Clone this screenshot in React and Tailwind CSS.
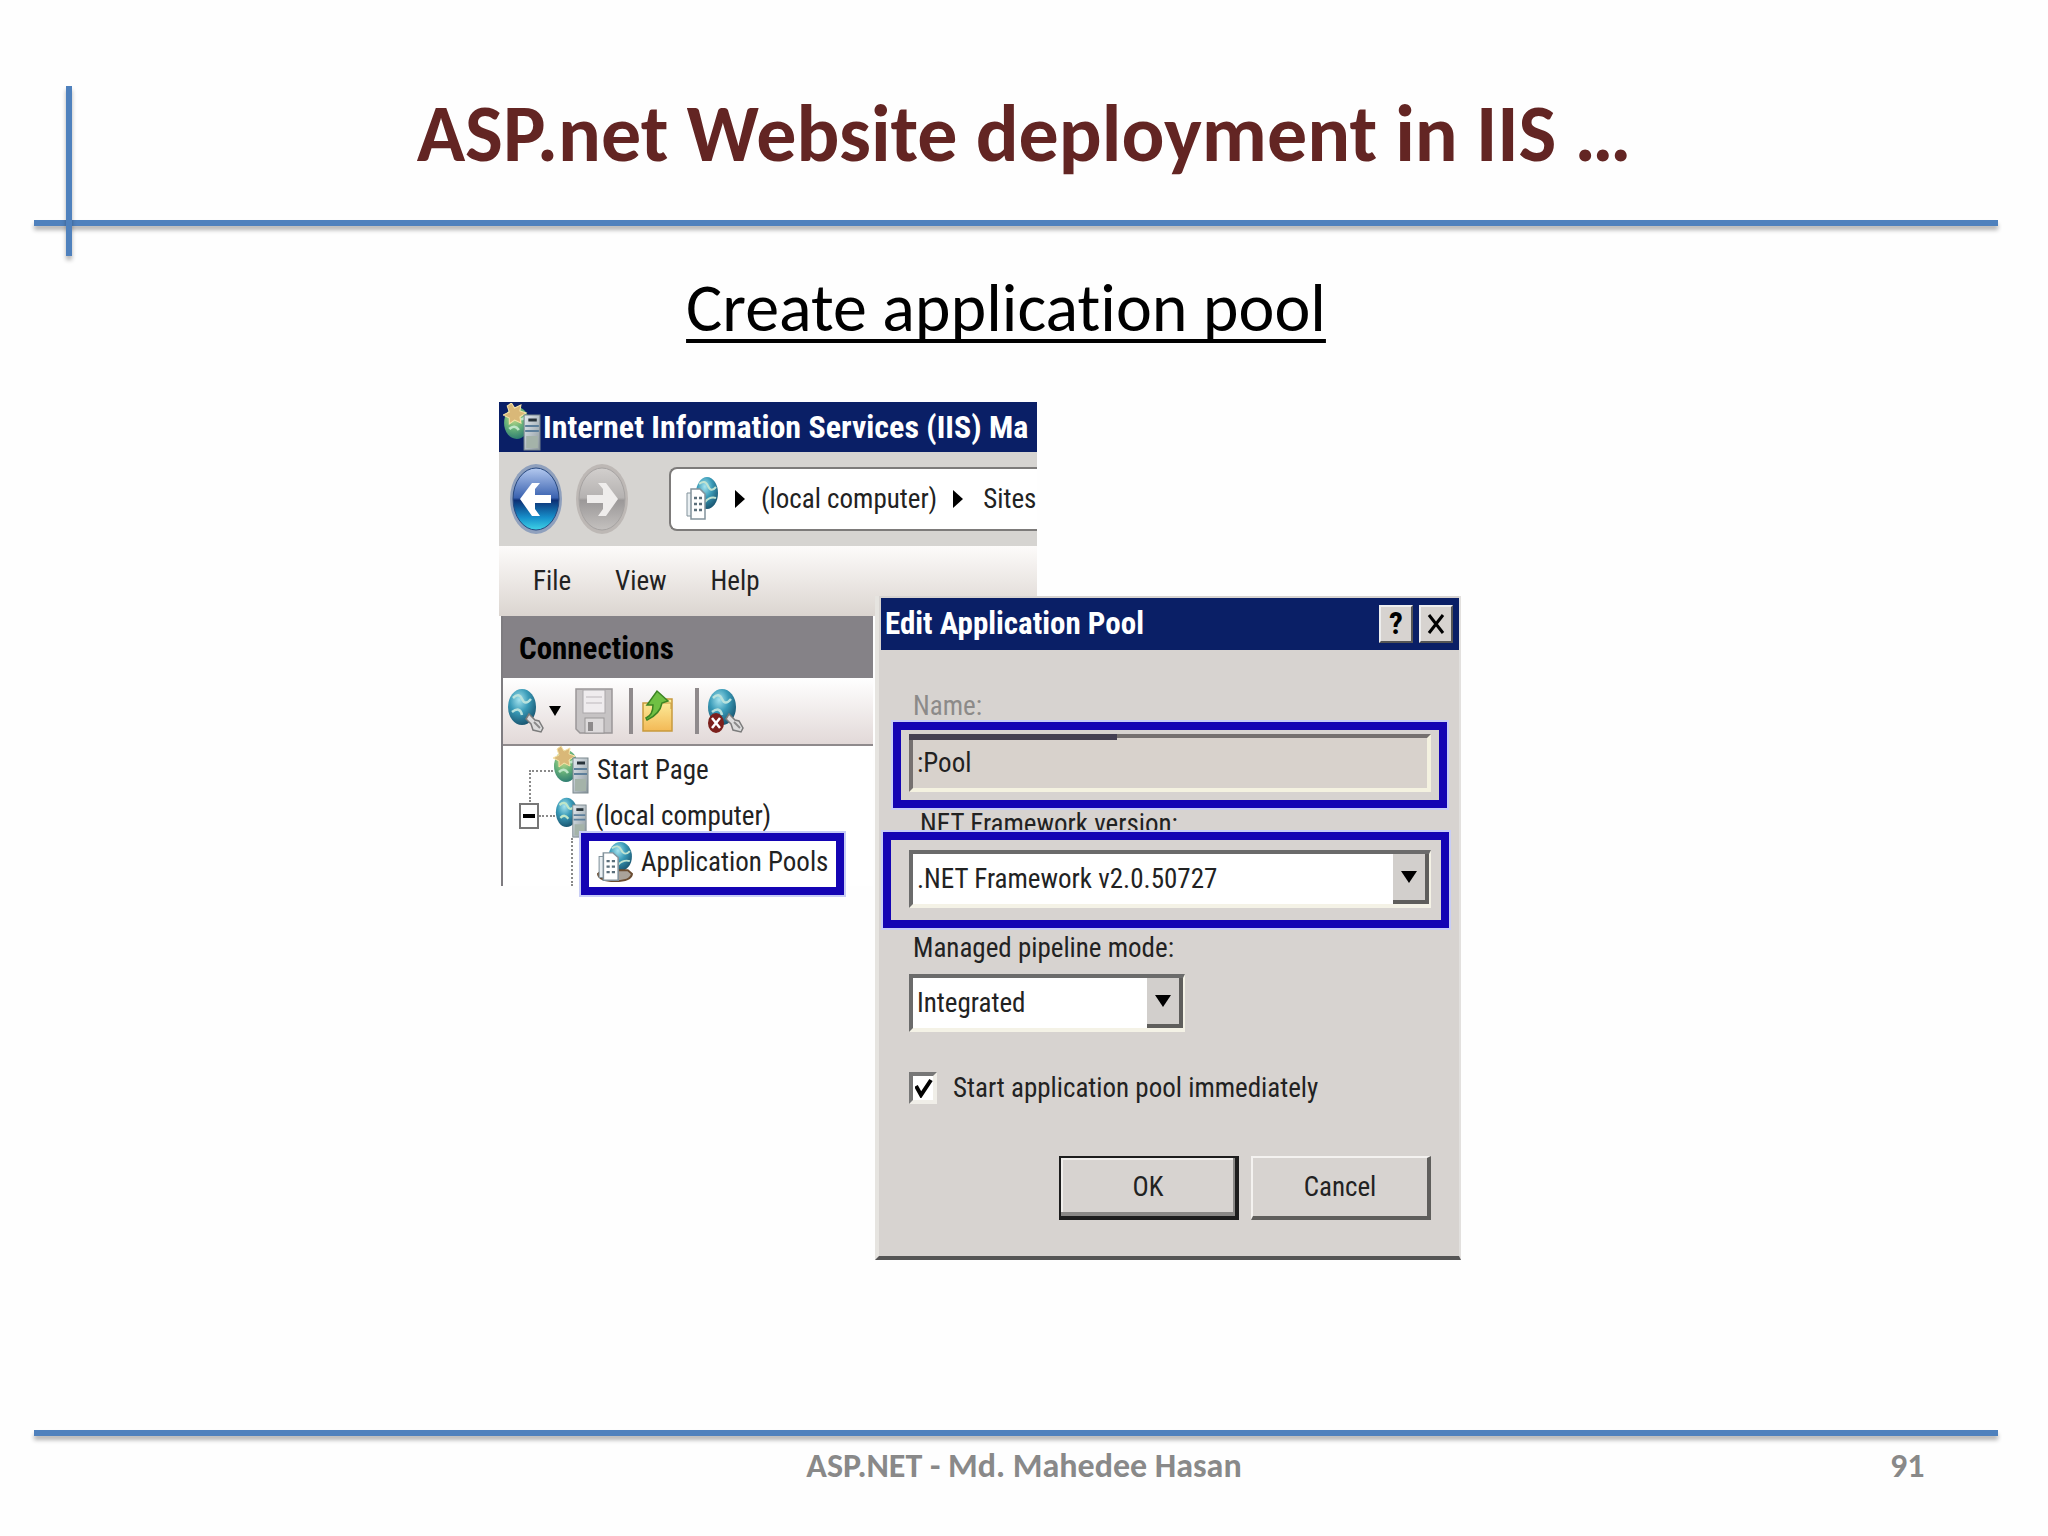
import { useState } from "react";

const uiFont = "font-['Roboto_Condensed','Roboto',sans-serif]";

// Shared gradients for the small drawings
const IconDefs = () => (
  <svg className="absolute size-0" aria-hidden="true">
    <defs>
      <radialGradient id="globe" cx="0.4" cy="0.3" r="0.75">
        <stop offset="0" stopColor="#a5e3ee" />
        <stop offset="0.45" stopColor="#3a9bb8" />
        <stop offset="1" stopColor="#17506b" />
      </radialGradient>
      <radialGradient id="greenGlobe" cx="0.4" cy="0.3" r="0.8">
        <stop offset="0" stopColor="#d7e08c" />
        <stop offset="0.45" stopColor="#6db67a" />
        <stop offset="1" stopColor="#1f6f6f" />
      </radialGradient>
      <linearGradient id="tower" x1="0" y1="0" x2="1" y2="1">
        <stop offset="0" stopColor="#e3eaf0" />
        <stop offset="1" stopColor="#8b979c" />
      </linearGradient>
      <linearGradient id="backTop" x1="0" y1="0" x2="0" y2="1">
        <stop offset="0" stopColor="#b4c9ef" />
        <stop offset="0.48" stopColor="#3a62b0" />
        <stop offset="0.52" stopColor="#0c2f74" />
        <stop offset="0.8" stopColor="#1690cb" />
        <stop offset="1" stopColor="#3fd3e6" />
      </linearGradient>
      <linearGradient id="forwardTop" x1="0" y1="0" x2="0" y2="1">
        <stop offset="0" stopColor="#d2cfcd" />
        <stop offset="0.48" stopColor="#b5b2b1" />
        <stop offset="0.52" stopColor="#9b9898" />
        <stop offset="1" stopColor="#c4c1bf" />
      </linearGradient>
      <linearGradient id="folder" x1="0" y1="0" x2="0" y2="1">
        <stop offset="0" stopColor="#fdf0a0" />
        <stop offset="1" stopColor="#f3b956" />
      </linearGradient>
    </defs>
  </svg>
);

const ServerIcon = ({ className, start }) => (
  <svg viewBox="0 0 36 48" preserveAspectRatio="none" className={className}>
    <ellipse cx="13" cy="20" rx="12" ry="16" fill={start ? "url(#greenGlobe)" : "url(#globe)"} />
    <path d="M5 12q6-5 9 1t7 1M6 26q5-5 9 1" fill="none" stroke="#bfe6c8" strokeWidth="2.5" />
    {start && (
      <path
        d="M8 0l3 5 6-3-1 6 6 2-6 4 1 6-6-3-5 4v-6l-6-3 6-3-2-6z"
        fill="#d9b878"
        stroke="#f6e3a8"
      />
    )}
    <rect x="20" y="12" width="15" height="35" fill="url(#tower)" stroke="#7b888e" />
    <path d="M24 17h8" stroke="#28333a" strokeWidth="3" />
    <path d="M21 23h13M21 28h13" stroke="#5d7f9b" strokeWidth="2" />
    <rect x="22" y="33" width="11" height="12" fill="#a4b3a9" />
  </svg>
);

const PageGlobeIcon = ({ className, tray }) => (
  <svg viewBox="0 0 34 46" preserveAspectRatio="none" className={className}>
    <ellipse cx="22" cy="17" rx="11" ry="16" fill="url(#globe)" />
    <path d="M14 8q6-5 9 2t8 1M20 26q5-6 11-4" fill="none" stroke="#bfe3d2" strokeWidth="2" />
    {tray && (
      <path d="M1 36q1 8 16 8t16-8l-4-4H5z" fill="#a9a29a" stroke="#6b4d32" strokeWidth="2" />
    )}
    <path d="M2 17h14v23H2z" fill="#e9eff2" stroke="#83939c" />
    <path d="M6 13h9l5 5v25H6z" fill="#fff" stroke="#83939c" strokeWidth="1.5" />
    <path d="M9 22h3M14 22h3M9 28h3M14 28h3M9 34h3M14 34h3" stroke="#5b6f7b" strokeWidth="2.5" />
  </svg>
);

const ConnectIcon = ({ className, disconnect }) => (
  <svg viewBox="0 0 38 46" preserveAspectRatio="none" className={className}>
    <ellipse cx="15" cy="19" rx="14" ry="18" fill="url(#globe)" />
    <path d="M6 10q6-6 9 1t9 0M5 24q8-6 10 3" fill="none" stroke="#b9e2dd" strokeWidth="2.5" />
    <path d="M22 26l6 6 4 1 4 7-2 4-8-2-2-6-5-5z" fill="#dcdcdc" stroke="#7c7c7c" strokeWidth="1.5" />
    <path d="M27 34l6 6" stroke="#8b8b8b" strokeWidth="2" />
    {disconnect && (
      <>
        <ellipse cx="9" cy="35" rx="8" ry="10" fill="#7c201c" />
        <path d="M5 30l8 10M13 30l-8 10" stroke="#fff" strokeWidth="2.5" />
      </>
    )}
  </svg>
);

const SaveIcon = () => (
  <svg viewBox="0 0 38 46" preserveAspectRatio="none" className="h-11.5 w-9.5">
    <path d="M1 1h36v44H5l-4-4z" fill="#c6c3c4" stroke="#9a9798" strokeWidth="1.5" />
    <rect x="8" y="2" width="22" height="23" fill="#efecee" stroke="#aaa7a9" />
    <path d="M11 9h16M11 15h16" stroke="#d6d2d5" strokeWidth="2" />
    <rect x="10" y="30" width="19" height="15" fill="#dddadb" stroke="#9a9798" />
    <rect x="13" y="34" width="5" height="9" fill="#8d8a8b" />
  </svg>
);

const UpFolderIcon = () => (
  <svg viewBox="0 0 34 44" preserveAspectRatio="none" className="h-11 w-8.5">
    <path d="M2 14h12l3-4h14v32H2z" fill="url(#folder)" stroke="#c79a3e" strokeWidth="1.5" />
    <path d="M22 14h8v6" fill="none" stroke="#c79a3e" />
    <path
      d="M5 29q7-3 7-13H6L16 2l11 10-6 2q-2 11-15 17z"
      fill="#6fc043"
      stroke="#3c8424"
      strokeWidth="1.5"
    />
  </svg>
);

const NavIcon = ({ forward }) => (
  <svg viewBox="0 0 54 72" preserveAspectRatio="none" className="h-18 w-13.5">
    <ellipse cx="27" cy="36" rx="26" ry="35" fill={forward ? "#bdb8b5" : "#8fa0bd"} />
    <ellipse
      cx="27"
      cy="36"
      rx="23"
      ry="31"
      fill={forward ? "url(#forwardTop)" : "url(#backTop)"}
      stroke={forward ? "#a5a2a1" : "#27487f"}
    />
    {forward ? (
      <path d="M12 32h16v-6l-5-6h8l12 16-12 17h-8l5-7v-6H12z" fill="#efedec" />
    ) : (
      <path d="M42 32H26v-6l5-6h-8L11 36l12 17h8l-5-7v-6h16z" fill="#fff" />
    )}
  </svg>
);

const Triangle = ({ className, down }) => (
  <svg viewBox="0 0 10 10" preserveAspectRatio="none" className={className}>
    <path d={down ? "M0 0h10L5 10z" : "M0 0v10l10-5z"} fill="#000" />
  </svg>
);

const Highlight = ({ className }) => (
  <span
    className={`pointer-events-none absolute border-8 border-[#1404b4] outline-2 outline-[#c8cdf5] ${className}`}
  />
);

const Dropdown = ({ id, className, options }) => (
  <div className={`relative ${className}`}>
    <select
      id={id}
      className="h-14.5 w-full appearance-none border-t-4 border-r-2 border-b-4 border-l-4 border-t-[#6b6b6b] border-r-[#f4f2e6] border-b-[#f4f2e6] border-l-[#6b6b6b] bg-white pl-1 text-[27px] leading-8 text-[#222]"
    >
      {options.map((option) => (
        <option key={option}>{option}</option>
      ))}
    </select>
    <span className="pointer-events-none absolute top-1 right-0.5 bottom-1 flex w-9 items-center justify-center border-r-4 border-b-4 border-[#5f5e5c] bg-[#d2cfcc]">
      <Triangle down className="h-3 w-4" />
    </span>
  </div>
);

const Divider = () => <span className="h-11.5 w-1 bg-[#8f8a8c]" />;

const ManagerWindow = () => (
  <div className="w-134.5 text-[27px] leading-8 text-[#222]">
    <div className="flex h-12.5 items-center gap-0.5 overflow-hidden bg-[#0a1f66] pl-1">
      <ServerIcon start className="h-12 w-9.5 shrink-0" />
      <span className="text-[32px] font-bold whitespace-nowrap text-white">
        Internet Information Services (IIS) Ma
      </span>
    </div>

    {/* Navigation bar */}
    <div className="flex h-23.5 items-center overflow-hidden bg-[#d6d4d1] pl-2.5">
      <button type="button" aria-label="Back">
        <NavIcon />
      </button>
      <button type="button" aria-label="Forward" className="ml-3">
        <NavIcon forward />
      </button>
      <div className="ml-10 flex h-16 flex-1 items-center rounded-l-lg border-y-2 border-l-2 border-[#7d7b7a] bg-white pl-3.5 whitespace-nowrap">
        <PageGlobeIcon className="h-11.5 w-8.5 shrink-0" />
        <Triangle className="mx-4 h-4.5 w-2.5 shrink-0" />
        <span>(local computer)</span>
        <Triangle className="mr-5 ml-4 h-4.5 w-2.5 shrink-0" />
        <span>Sites</span>
      </div>
    </div>

    <nav className="flex h-17.5 items-center gap-11 bg-linear-to-b from-[#fdfbfa] to-[#dbd5d0] pl-8.5">
      <button type="button">File</button>
      <button type="button">View</button>
      <button type="button">Help</button>
    </nav>

    <div className="ml-0.5 w-93 border-l-2 border-[#7e7c80]">
      <h3 className="flex h-15.5 items-center bg-[#858287] pt-1 pl-4 text-[31px] font-bold text-black">
        Connections
      </h3>
      <div className="flex h-17 items-center border-b-2 border-[#8f8a8c] bg-linear-to-b from-white to-[#e2d9d8] pl-1">
        <button type="button" aria-label="Connect" className="flex items-center gap-1">
          <ConnectIcon className="h-11.5 w-9.5" />
          <Triangle down className="h-2.5 w-3" />
        </button>
        <button type="button" aria-label="Save" className="mr-4 ml-3.5">
          <SaveIcon />
        </button>
        <Divider />
        <button type="button" aria-label="Up" className="mr-5 ml-2">
          <UpFolderIcon />
        </button>
        <Divider />
        <button type="button" aria-label="Disconnect" className="ml-2">
          <ConnectIcon disconnect className="h-11.5 w-9.5" />
        </button>
      </div>

      {/* Tree */}
      <ul className="relative bg-white">
        <li className="flex h-12 items-center">
          <span className="mt-6 ml-6.5 h-8 w-6 shrink-0 self-start border-t-2 border-l-2 border-dotted border-[#8a8a8a]" />
          <ServerIcon start className="h-12 w-9 shrink-0" />
          <span className="ml-2">Start Page</span>
        </li>
        <li className="flex h-11 items-center">
          <span className="ml-4 flex h-6.5 w-5 items-center justify-center border-2 border-[#777]">
            <span className="h-1 w-3 bg-black" />
          </span>
          <span className="w-4 border-t-2 border-dotted border-[#8a8a8a]" />
          <ServerIcon className="h-11 w-8" />
          <span className="ml-2">(local computer)</span>
        </li>
        <li className="flex h-12 items-center">
          <span className="ml-17 h-12 w-6.5 border-l-2 border-dotted border-[#8a8a8a]" />
          <span className="relative flex items-center gap-2">
            <PageGlobeIcon tray className="h-10.5 w-9" />
            Application Pools
            <Highlight className="-top-2 -right-4 -bottom-3 -left-4" />
          </span>
        </li>
      </ul>
    </div>
  </div>
);

const PoolDialog = () => {
  const [autoStart, setAutoStart] = useState(true);

  return (
    <form className="absolute top-48.5 left-94 w-146.5 border-r-2 border-b-4 border-l-4 border-r-[#e2e0de] border-b-[#555] border-l-[#e6e4e0] bg-[#d7d3d0] text-[27px] leading-8 text-[#222]">
      <div className="mt-0.5 ml-0.5 flex h-13 items-center gap-1.5 bg-[#0a1f66] pr-1.5 pl-1">
        <h3 className="flex-1 text-[31px] font-bold text-white">Edit Application Pool</h3>
        <button
          type="button"
          className="h-9.5 w-8.5 border-2 border-t-[#eee] border-r-[#555] border-b-[#555] border-l-[#eee] bg-[#d7d3d0] text-[31px] font-bold text-black"
        >
          ?
        </button>
        <button
          type="button"
          aria-label="Close"
          className="flex h-9.5 w-8.5 items-center justify-center border-2 border-t-[#eee] border-r-[#555] border-b-[#555] border-l-[#eee] bg-[#d7d3d0]"
        >
          <svg viewBox="0 0 18 20" className="h-5 w-4.5">
            <path d="M2 1l14 18M16 1L2 19" stroke="#000" strokeWidth="3" />
          </svg>
        </button>
      </div>

      <div className="flex flex-col items-start pt-10 pr-7 pb-9 pl-7.5">
        <label htmlFor="name" className="pl-1 text-[#8c8a89]">
          Name:
        </label>
        <div className="relative mt-3 w-full">
          <input
            id="name"
            readOnly
            defaultValue=":Pool"
            className="h-14.5 w-full border-t-4 border-r-4 border-b-4 border-l-4 border-t-[#75706f] border-r-[#f4f2e0] border-b-[#f4f2e0] border-l-[#75706f] bg-[#d8d2cc] pl-1 outline-none"
          />
          <span className="absolute top-0 left-0 h-1.5 w-52 bg-[#444052]" />
          <Highlight className="-inset-x-4 -top-3 -bottom-4" />
        </div>

        <label htmlFor="framework" className="mt-4 pl-1">
          .NET Framework version:
        </label>
        <div className="relative mt-2.5 w-full">
          <Dropdown id="framework" className="w-full" options={[".NET Framework v2.0.50727"]} />
          <Highlight className="-top-4.5 -right-4.5 -bottom-5 -left-6.5" />
        </div>

        <label htmlFor="pipeline" className="mt-6 pl-1">
          Managed pipeline mode:
        </label>
        <Dropdown id="pipeline" className="mt-2.5 w-69" options={["Integrated", "Classic"]} />

        <label className="mt-10 flex items-center gap-4">
          <span className="relative flex">
            <input
              type="checkbox"
              checked={autoStart}
              onChange={(e) => setAutoStart(e.target.checked)}
              className="h-8 w-7 appearance-none border-4 border-t-[#777] border-r-[#f0eee8] border-b-[#f0eee8] border-l-[#777] bg-white"
            />
            {autoStart && (
              <svg viewBox="0 0 18 20" className="pointer-events-none absolute top-1.5 left-1.5 h-5 w-4.5">
                <path d="M1 8l5 9L16 2" fill="none" stroke="#000" strokeWidth="4" />
              </svg>
            )}
          </span>
          Start application pool immediately
        </label>

        <div className="mt-13 flex gap-3 self-end">
          <button
            type="button"
            className="h-16 w-45 border-2 border-r-4 border-b-4 border-[#1d1d1d] shadow-[inset_-2px_-4px_0_#8a8886,inset_2px_2px_0_#f0eeec]"
          >
            OK
          </button>
          <button
            type="button"
            className="h-16 w-45 border-2 border-r-4 border-b-4 border-t-[#f4f2f0] border-r-[#5f5e5c] border-b-[#5f5e5c] border-l-[#f4f2f0]"
          >
            Cancel
          </button>
        </div>
      </div>
    </form>
  );
};

const Rule = () => <div className="h-1.5 bg-[#4f81bd] shadow-[0_4px_4px_#0000004d]" />;

const App = () => (
  <div className="flex min-h-screen flex-col bg-[#fefefe] font-['Carlito','Lato',sans-serif] [font-variant-ligatures:none]">
    <IconDefs />
    <header className="relative mr-12.5 ml-8.5">
      <span className="absolute top-21.5 left-8 h-42.5 w-1.5 bg-[#4f81bd] shadow-[0_4px_4px_#0000004d]" />
      <h1 className="pt-21 pb-9 pl-4 text-center text-[80px] leading-25 font-bold text-[#632523]">
        ASP.net Website deployment in IIS …
      </h1>
      <Rule />
    </header>

    <main className="flex-1">
      <h2 className="mt-10.5 pr-9 text-center text-[68px] leading-20 underline decoration-4 underline-offset-8 [text-decoration-skip-ink:none]">
        Create application pool
      </h2>
      <div className={`mt-13.5 flex justify-center pr-22.5 ${uiFont}`}>
        <div className="relative h-215 w-240">
          <ManagerWindow />
          <PoolDialog />
        </div>
      </div>
    </main>

    <footer className="mr-12.5 ml-8.5">
      <Rule />
      <div className="flex pt-3 pb-13 text-[34px] leading-9 font-bold text-[#898989]">
        <span className="w-27" />
        <span className="flex-1 pl-4 text-center">ASP.NET - Md. Mahedee Hasan</span>
        <span className="w-27">91</span>
      </div>
    </footer>
  </div>
);

export default App;
